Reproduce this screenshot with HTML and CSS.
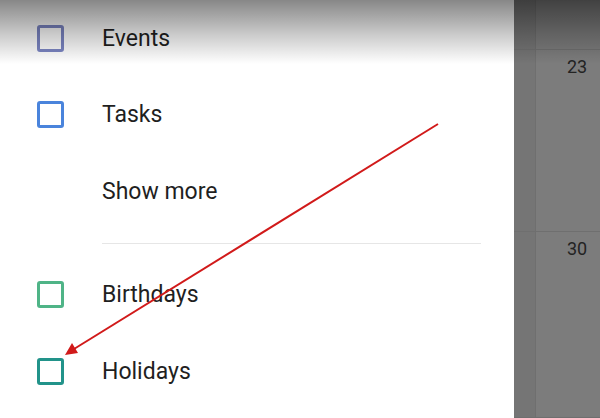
FILE: index.html
```html
<!DOCTYPE html>
<html>
<head>
  <meta name="viewport" content="width=device-width, initial-scale=1.0">
  <link rel="stylesheet" href="styles.css">
</head>
<body>
  <div class="screen">
    <!-- side drawer with calendar list -->
    <div class="drawer">
      <div class="row">
        <span class="box events"></span>
        <span class="label">Events</span>
      </div>
      <div class="row">
        <span class="box tasks"></span>
        <span class="label">Tasks</span>
      </div>
      <div class="row">
        <span class="label">Show more</span>
      </div>
      <div class="divider"></div>
      <div class="row">
        <span class="box birthdays"></span>
        <span class="label">Birthdays</span>
      </div>
      <div class="row">
        <span class="box holidays"></span>
        <span class="label">Holidays</span>
      </div>
    </div>

    <!-- month view behind the scrim -->
    <div class="month">
      <div class="cell edge"></div>
      <div class="cell"></div>
      <div class="cell edge"></div>
      <div class="cell day">23</div>
      <div class="cell edge"></div>
      <div class="cell day">30</div>
    </div>

    <div class="top-shade"></div>

    <svg class="pointer" width="600" height="418" viewBox="0 0 600 418">
      <line x1="438" y1="124" x2="74" y2="349" stroke="#d11a1a" stroke-width="2"/>
      <polygon points="65,355 72,343 78,353" fill="#d11a1a"/>
    </svg>
  </div>
</body>
</html>
```

FILE: styles.css
```css
:root {
  --text: #1f1f1f;
  --scrim: #7c7c7c;
  --grid-line: #6f6f6f;
}
body {
  margin: 0;
  font-family: Roboto, "Noto Sans", Arial, sans-serif;
  background: #fff;
}
.screen {
  position: relative;
  display: flex;
  width: 600px;
  height: 418px;
  overflow: hidden;
}
.drawer {
  width: 514px;
  background: #fff;
  display: flex;
  flex-direction: column;
}
.row {
  height: 77px;
  display: flex;
  align-items: center;
  padding-left: 37px;
}
.row:first-child {
  height: 76px;
}
.box {
  width: 21px;
  height: 21px;
  border: 3px solid;
  border-radius: 3px;
  margin-right: 38px;
  flex-shrink: 0;
}
.row .label:first-child {
  margin-left: 65px;
}
.label {
  font-size: 23px;
  color: var(--text);
}
.events { border-color: #7c86c4; }
.tasks { border-color: #4a84dc; }
.birthdays { border-color: #4fb487; }
.holidays { border-color: #22938a; }
.divider {
  height: 1px;
  background: #e6e6e6;
  margin: 13px 33px 12px 102px;
}
.month {
  flex: 1;
  background: var(--scrim);
  display: grid;
  grid-template-columns: 22px 1fr;
  grid-template-rows: 50px 182px 1fr;
  box-shadow: inset 4px 0 4px -2px rgba(0,0,0,0.15);
}
.cell {
  border-bottom: 1px solid var(--grid-line);
}
.cell.edge {
  background: #757575;
  border-right: 1px solid var(--grid-line);
}
.day {
  font-size: 18px;
  color: #232323;
  padding: 6px 0 0 31px;
}
.top-shade {
  position: absolute;
  left: 0;
  top: 0;
  width: 600px;
  height: 64px;
  background: linear-gradient(rgba(0,0,0,0.47), rgba(0,0,0,0.2) 55%, rgba(0,0,0,0));
  pointer-events: none;
}
.pointer {
  position: absolute;
  left: 0;
  top: 0;
}
```
